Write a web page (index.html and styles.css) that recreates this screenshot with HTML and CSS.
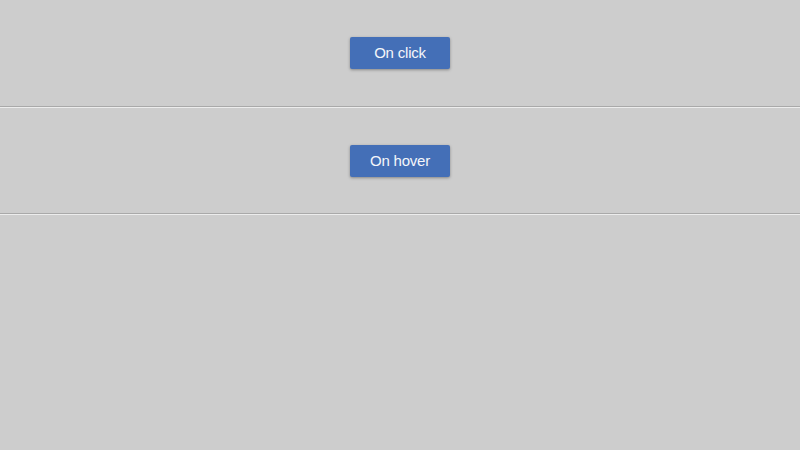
FILE: index.html
```html
<!DOCTYPE html>
<html>
<head>
<meta charset="utf-8">
<link rel="stylesheet" href="styles.css">
</head>
<body>
<div class="section first">
  <button class="btn">On click</button>
</div>
<hr class="divider">
<div class="section">
  <button class="btn">On hover</button>
</div>
<hr class="divider">
</body>
</html>
```
FILE: styles.css
```css
html, body {
  margin: 0;
  padding: 0;
  background: #cdcdcd;
  height: 100%;
}
body {
  font-family: "Liberation Sans", Arial, sans-serif;
}
.section {
  display: flex;
  justify-content: center;
  padding: 37px 0 36px;
}
.section.first {
  padding-bottom: 37px;
}
.btn {
  width: 100px;
  height: 32px;
  border: none;
  border-radius: 2px;
  background: #446fb7;
  color: #f4f6fa;
  font-family: "Liberation Sans", Arial, sans-serif;
  font-size: 15px;
  letter-spacing: -0.2px;
  padding: 0 0 2px;
  box-shadow: 0 1px 3px rgba(0, 0, 0, 0.35);
  cursor: pointer;
}
.divider {
  margin: 0;
  border: none;
  border-top: 1px solid #a9a9a9;
  border-bottom: 1px solid #ececec;
  height: 0;
}
```
